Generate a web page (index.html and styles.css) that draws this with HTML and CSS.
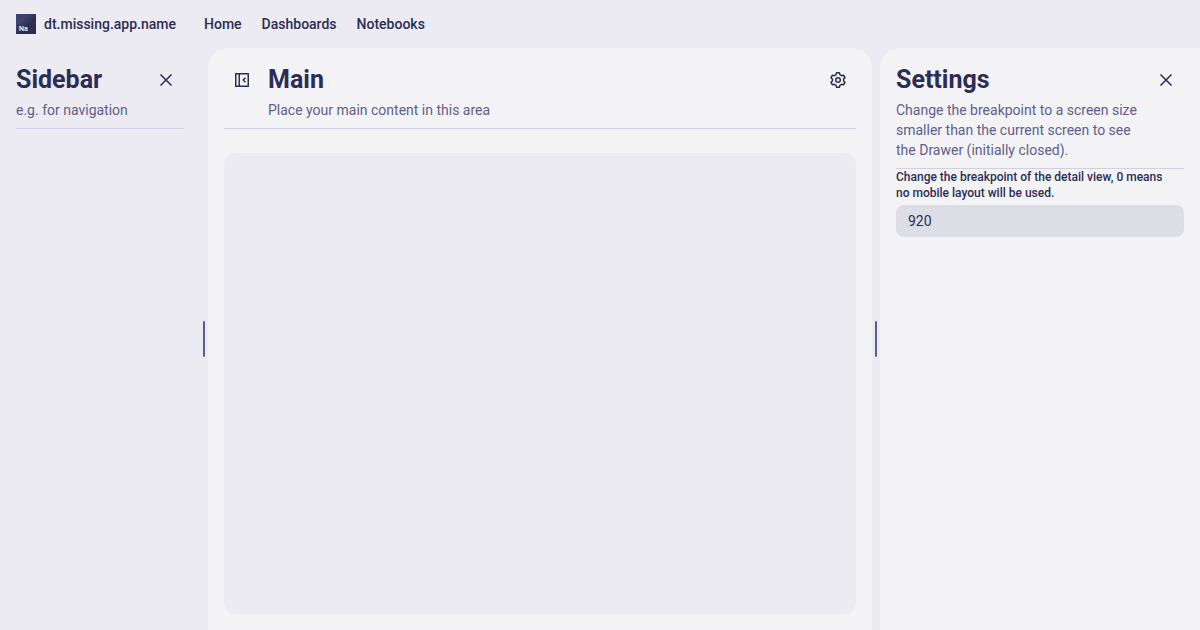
FILE: index.html
```
<!DOCTYPE html>
<html lang="en">
<head>
    <meta charset="UTF-8">
    <meta name="viewport" content="width=device-width, initial-scale=1.0">
    <title>dt.missing.app.name</title>
    <link rel="stylesheet" href="styles.css">
</head>
<body>
    <header class="app-header">
        <a href="#" class="app-name">
            <svg class="app-logo" viewBox="0 0 20 20" aria-hidden="true">
                <defs>
                    <linearGradient id="logo-bg" x1="0" y1="0" x2="1" y2="1">
                        <stop offset="0.3" stop-color="#3f4171"/>
                        <stop offset="0.6" stop-color="#2c2d4f"/>
                    </linearGradient>
                </defs>
                <rect width="20" height="20" fill="url(#logo-bg)"/>
                <text x="3" y="17" class="logo-text">Na</text>
            </svg>
            dt.missing.app.name
        </a>
        <nav class="app-nav">
            <a href="#">Home</a>
            <a href="#">Dashboards</a>
            <a href="#">Notebooks</a>
        </nav>
    </header>

    <div class="page">
        <aside class="sidebar">
            <div class="title-bar">
                <div class="title-text">
                    <h2>Sidebar</h2>
                    <p>e.g. for navigation</p>
                </div>
                <button type="button" class="icon-btn" aria-label="Close sidebar">
                    <svg viewBox="0 0 20 20"><path d="M4.5 4.5l11 11M15.5 4.5l-11 11"/></svg>
                </button>
            </div>
        </aside>

        <div class="resizer"></div>

        <main class="main">
            <div class="title-bar">
                <button type="button" class="icon-btn" aria-label="Collapse sidebar">
                    <svg viewBox="0 0 20 20"><path d="M3.75 3.75h12.5v12.5H3.75zM7.25 3.75v12.5M13.5 7.75L11.25 10l2.25 2.25"/></svg>
                </button>
                <div class="title-text">
                    <h1>Main</h1>
                    <p>Place your main content in this area</p>
                </div>
                <button type="button" class="icon-btn" aria-label="Open settings">
                    <svg viewBox="0 0 20 20" stroke-linejoin="round"><path d="M8.6 2.75H11.4L11.9 4.6L13.7 5.65L15.6 5.15L17 7.6L15.6 8.95V11.05L17 12.4L15.6 14.85L13.7 14.35L11.9 15.4L11.4 17.25H8.6L8.1 15.4L6.3 14.35L4.4 14.85L3 12.4L4.4 11.05V8.95L3 7.6L4.4 5.15L6.3 5.65L8.1 4.6z"/><circle cx="10" cy="10" r="2.25"/></svg>
                </button>
            </div>
            <div class="main-content"></div>
        </main>

        <div class="resizer"></div>

        <aside class="settings">
            <div class="title-bar">
                <div class="title-text">
                    <h2>Settings</h2>
                    <p>Change the breakpoint to a screen size smaller than the current screen to see the Drawer (initially closed).</p>
                </div>
                <button type="button" class="icon-btn" aria-label="Close settings">
                    <svg viewBox="0 0 20 20"><path d="M4.5 4.5l11 11M15.5 4.5l-11 11"/></svg>
                </button>
            </div>
            <div class="form-field">
                <label for="breakpoint">Change the breakpoint of the detail view, 0 means no mobile layout will be used.</label>
                <input type="text" inputmode="numeric" id="breakpoint" value="920">
            </div>
        </aside>
    </div>
</body>
</html>
```
FILE: styles.css
```
:root {
    --bg-color: #ecebf2;
    --surface-color: #f3f3f6;
    --field-color: #dddde6;
    --border-color: #d0d0e0;
    --text-color: #2c2d54;
    --text-subdued: #60608a;
    --handle-color: #5b5b89;
}

* {
    box-sizing: border-box;
}

body {
    font-family: Roboto, "Noto Sans", sans-serif;
    font-size: 14px;
    line-height: 20px;
    background: var(--bg-color);
    color: var(--text-color);
    margin: 0;
    height: 100vh;
    display: flex;
    flex-direction: column;
}

a {
    color: inherit;
    text-decoration: none;
}

.app-header {
    display: flex;
    align-items: center;
    gap: 28px;
    height: 48px;
    padding: 0 16px;
    font-weight: 500;
}

.app-name {
    display: flex;
    align-items: center;
    gap: 8px;
}

.app-logo {
    width: 20px;
    height: 20px;
}

.logo-text {
    fill: #fff;
    font-size: 7px;
    font-weight: 500;
}

.app-nav {
    display: flex;
    gap: 20px;
}

.page {
    flex: 1;
    min-height: 0;
    display: grid;
    grid-template-columns: 200px 8px 1fr 8px 320px;
}

.sidebar,
.main,
.settings {
    padding: 16px;
}

.main,
.settings {
    background: var(--surface-color);
}

.main {
    display: flex;
    flex-direction: column;
    gap: 24px;
    border-radius: 20px 20px 0 0;
}

.settings {
    border-radius: 20px 0 0 0;
}

.title-bar {
    display: flex;
    align-items: flex-start;
    gap: 8px;
    padding-bottom: 8px;
    border-bottom: 1px solid var(--border-color);
}

.title-text {
    flex: 1;
}

h1,
h2 {
    font-size: 25px;
    line-height: 32px;
    font-weight: 700;
    margin: 0 0 4px;
}

p {
    margin: 0;
    color: var(--text-subdued);
}

.icon-btn {
    display: flex;
    align-items: center;
    justify-content: center;
    width: 36px;
    height: 32px;
    padding: 0;
    border: none;
    border-radius: 8px;
    background: none;
    color: inherit;
    cursor: pointer;
}

.icon-btn svg {
    width: 20px;
    height: 20px;
    fill: none;
    stroke: currentColor;
    stroke-width: 1.5;
}

.main-content {
    flex: 1;
    border-radius: 12px;
    background: var(--bg-color);
}

.resizer {
    display: flex;
    align-items: center;
    justify-content: center;
    cursor: col-resize;
}

.resizer::before {
    content: "";
    width: 2px;
    height: 36px;
    border-radius: 1px;
    background: var(--handle-color);
}

.form-field {
    display: flex;
    flex-direction: column;
    gap: 4px;
}

label {
    padding-right: 12px;
    font-size: 12px;
    line-height: 16px;
    font-weight: 500;
}

input {
    width: 100%;
    height: 32px;
    padding: 0 12px;
    border: none;
    border-radius: 8px;
    background: var(--field-color);
    color: inherit;
    font: inherit;
}
```
